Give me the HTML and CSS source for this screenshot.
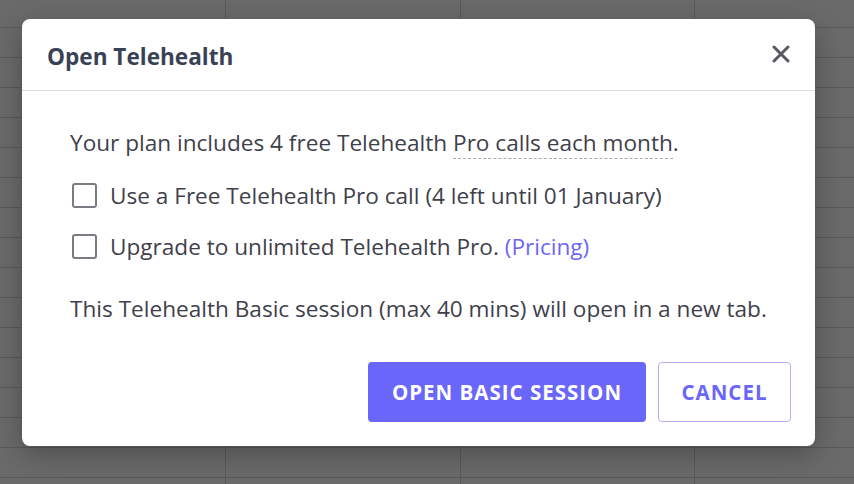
FILE: index.html
```html
<!DOCTYPE html>
<html>
<head>
<meta charset="utf-8">
<link rel="stylesheet" href="styles.css">
</head>
<body>
<div class="backdrop">
  <div class="grid"></div>
  <div class="overlay">
    <div class="dialog">
      <div class="dialog-header">
        <h2 class="dialog-title">Open Telehealth</h2>
        <button class="close-btn" aria-label="Close">
          <svg width="18" height="18" viewBox="0 0 18 18"><path d="M2 2 L16 16 M16 2 L2 16" stroke="#585865" stroke-width="3" stroke-linecap="round" fill="none"/></svg>
        </button>
      </div>
      <div class="dialog-body">
        <p class="intro">Your plan includes 4 free Telehealth <span class="dotted">Pro calls each month</span>.</p>
        <label class="check-row"><span class="box"></span><span>Use a Free Telehealth Pro call (4 left until 01 January)</span></label>
        <label class="check-row"><span class="box"></span><span>Upgrade to unlimited Telehealth Pro. <a class="link">(Pricing)</a></span></label>
        <p class="note">This Telehealth Basic session (max 40 mins) will open in a new tab.</p>
      </div>
      <div class="dialog-actions">
        <button class="btn btn-primary">OPEN BASIC SESSION</button>
        <button class="btn btn-outline">CANCEL</button>
      </div>
    </div>
  </div>
</div>
</body>
</html>
```
FILE: styles.css
```css
html, body {
  margin: 0;
  padding: 0;
  width: 854px;
  height: 484px;
  overflow: hidden;
  font-family: "Open Sans", "Noto Sans", sans-serif;
}
.backdrop {
  position: relative;
  width: 854px;
  height: 484px;
  background: #6a6a6a;
}
.grid {
  position: absolute;
  inset: 0;
  background-image:
    repeating-linear-gradient(to bottom, transparent 0, transparent 27px, #595959 27px, #595959 28px, transparent 28px, transparent 30px),
    linear-gradient(to right, transparent 225px, #595959 225px, #595959 226px, transparent 226px, transparent 460px, #595959 460px, #595959 461px, transparent 461px, transparent 694px, #595959 694px, #595959 695px, transparent 695px);
}
.overlay {
  position: absolute;
  inset: 0;
  padding: 19px 39px 38px 22px;
  box-sizing: border-box;
}
.dialog {
  width: 793px;
  height: 427px;
  background: #fff;
  border-radius: 8px;
  box-shadow: 0 8px 28px rgba(0,0,0,0.28);
  display: flex;
  flex-direction: column;
  box-sizing: border-box;
}
.dialog-header {
  height: 72px;
  box-sizing: border-box;
  border-bottom: 1px solid #dcdcdf;
  display: flex;
  align-items: center;
  justify-content: space-between;
  padding: 0 24px 0 25px;
}
.dialog-title {
  margin: 0;
  font-size: 22.6px;
  font-weight: 700;
  color: #394254;
  letter-spacing: 0;
  padding-top: 4px;
}
.close-btn {
  border: 0;
  background: none;
  padding: 0;
  width: 20px;
  height: 20px;
  display: flex;
  align-items: center;
  justify-content: center;
  margin-top: -2px;
}
.dialog-body {
  flex: 1;
  padding: 34px 48px 0 48px;
  color: #3f3f4b;
  font-size: 22.6px;
}
.intro {
  margin: 0 0 9px 0;
  line-height: 36px;
}
.dotted {
  border-bottom: 1px dashed #a8a8ae;
}
.check-row {
  display: flex;
  align-items: center;
  gap: 13px;
  height: 51px;
  padding-left: 2px;
}
.box {
  width: 25px;
  height: 25px;
  box-sizing: border-box;
  border: 2px solid #7c7b84;
  border-radius: 3px;
  flex: none;
}
.link {
  color: #6c66f8;
}
.note {
  margin: 19px 0 0 0;
  line-height: 36px;
}
.dialog-actions {
  display: flex;
  justify-content: flex-end;
  gap: 12px;
  padding: 0 24px 24px 0;
}
.btn {
  height: 60px;
  border-radius: 4px;
  font-family: "Open Sans", "Noto Sans", sans-serif;
  font-weight: 700;
  font-size: 20.5px;
  letter-spacing: 1px;
  padding: 0;
  cursor: pointer;
}
.btn-primary {
  background: #6a66fa;
  color: #fff;
  border: 0;
  width: 278px;
}
.btn-outline {
  background: #fff;
  color: #6a66fa;
  border: 1px solid #b4b1fa;
  width: 133px;
}
```
